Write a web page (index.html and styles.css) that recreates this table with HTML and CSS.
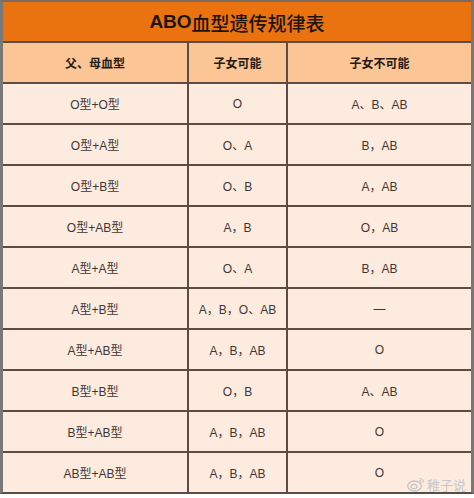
FILE: index.html
```html
<!DOCTYPE html>
<html lang="zh">
<head>
<meta charset="utf-8">
<title>ABO血型遗传规律表</title>
<link rel="stylesheet" href="styles.css">
</head>
<body>
<div class="page">
  <div class="sheet">
    <div class="title"><span class="abo">ABO</span>血型遗传规律表</div>
    <div class="cell head">父、母血型</div>
    <div class="cell head">子女可能</div>
    <div class="cell head">子女不可能</div>

    <div class="cell">O型+O型</div><div class="cell">O</div><div class="cell">A、B、AB</div>
    <div class="cell">O型+A型</div><div class="cell">O、A</div><div class="cell">B，AB</div>
    <div class="cell">O型+B型</div><div class="cell">O、B</div><div class="cell">A，AB</div>
    <div class="cell">O型+AB型</div><div class="cell">A，B</div><div class="cell">O，AB</div>
    <div class="cell">A型+A型</div><div class="cell">O、A</div><div class="cell">B，AB</div>
    <div class="cell">A型+B型</div><div class="cell">A，B，O、AB</div><div class="cell">—</div>
    <div class="cell">A型+AB型</div><div class="cell">A，B，AB</div><div class="cell">O</div>
    <div class="cell">B型+B型</div><div class="cell">O，B</div><div class="cell">A、AB</div>
    <div class="cell">B型+AB型</div><div class="cell">A，B，AB</div><div class="cell">O</div>
    <div class="cell">AB型+AB型</div><div class="cell">A，B，AB</div><div class="cell">O</div>
  </div>
  <div class="watermark">
    <svg class="wb" width="18" height="15" viewBox="0 0 18 15">
      <ellipse cx="7.5" cy="9" rx="6.8" ry="5" fill="none" stroke="#c2c2c2" stroke-width="1.3"/>
      <ellipse cx="7" cy="9.6" rx="3" ry="2.2" fill="none" stroke="#c2c2c2" stroke-width="1.1"/>
      <path d="M12.5 1.5 a4 4 0 0 1 4 4" fill="none" stroke="#c2c2c2" stroke-width="1.2"/>
      <path d="M12.3 3.6 a2 2 0 0 1 2 2" fill="none" stroke="#c2c2c2" stroke-width="1.1"/>
    </svg>
    <span class="wtext">稚子说</span>
  </div>
</div>
</body>
</html>
```

FILE: styles.css
```css
html, body {
  margin: 0;
  padding: 0;
  background: #ffffff;
}

.page {
  position: relative;
  width: 474px;
  height: 498px;
}

.sheet {
  box-sizing: border-box;
  width: 474px;
  display: grid;
  grid-template-columns: 184px 97px 183px;
  grid-auto-rows: 39px;
  gap: 2px;
  background: #5c4d44;
  border-left: 3px solid #787878;
  border-right: 3px solid #787878;
  border-top: 2px solid #7a6a60;
  border-bottom: 2px solid #5c4d44;
  font-family: "Liberation Sans", "Noto Sans CJK SC", sans-serif;
}

.title {
  grid-column: 1 / 4;
  background: #ea720f;
  display: flex;
  align-items: center;
  justify-content: center;
  padding-top: 1px;
  font-size: 19px;
  color: #1c1410;
  font-weight: 500;
}

.abo {
  font-weight: 700;
}

.cell {
  background: #fdebdf;
  display: flex;
  align-items: center;
  justify-content: center;
  font-size: 12px;
  color: #3d3733;
}

.head {
  background: #fbc596;
  font-weight: 700;
  color: #231a15;
}

.watermark {
  position: absolute;
  left: 407px;
  top: 475px;
  display: flex;
  align-items: center;
  gap: 2px;
}

.wtext {
  font-family: "Noto Sans CJK SC", sans-serif;
  font-size: 13px;
  color: #c8c8c8;
}
```
